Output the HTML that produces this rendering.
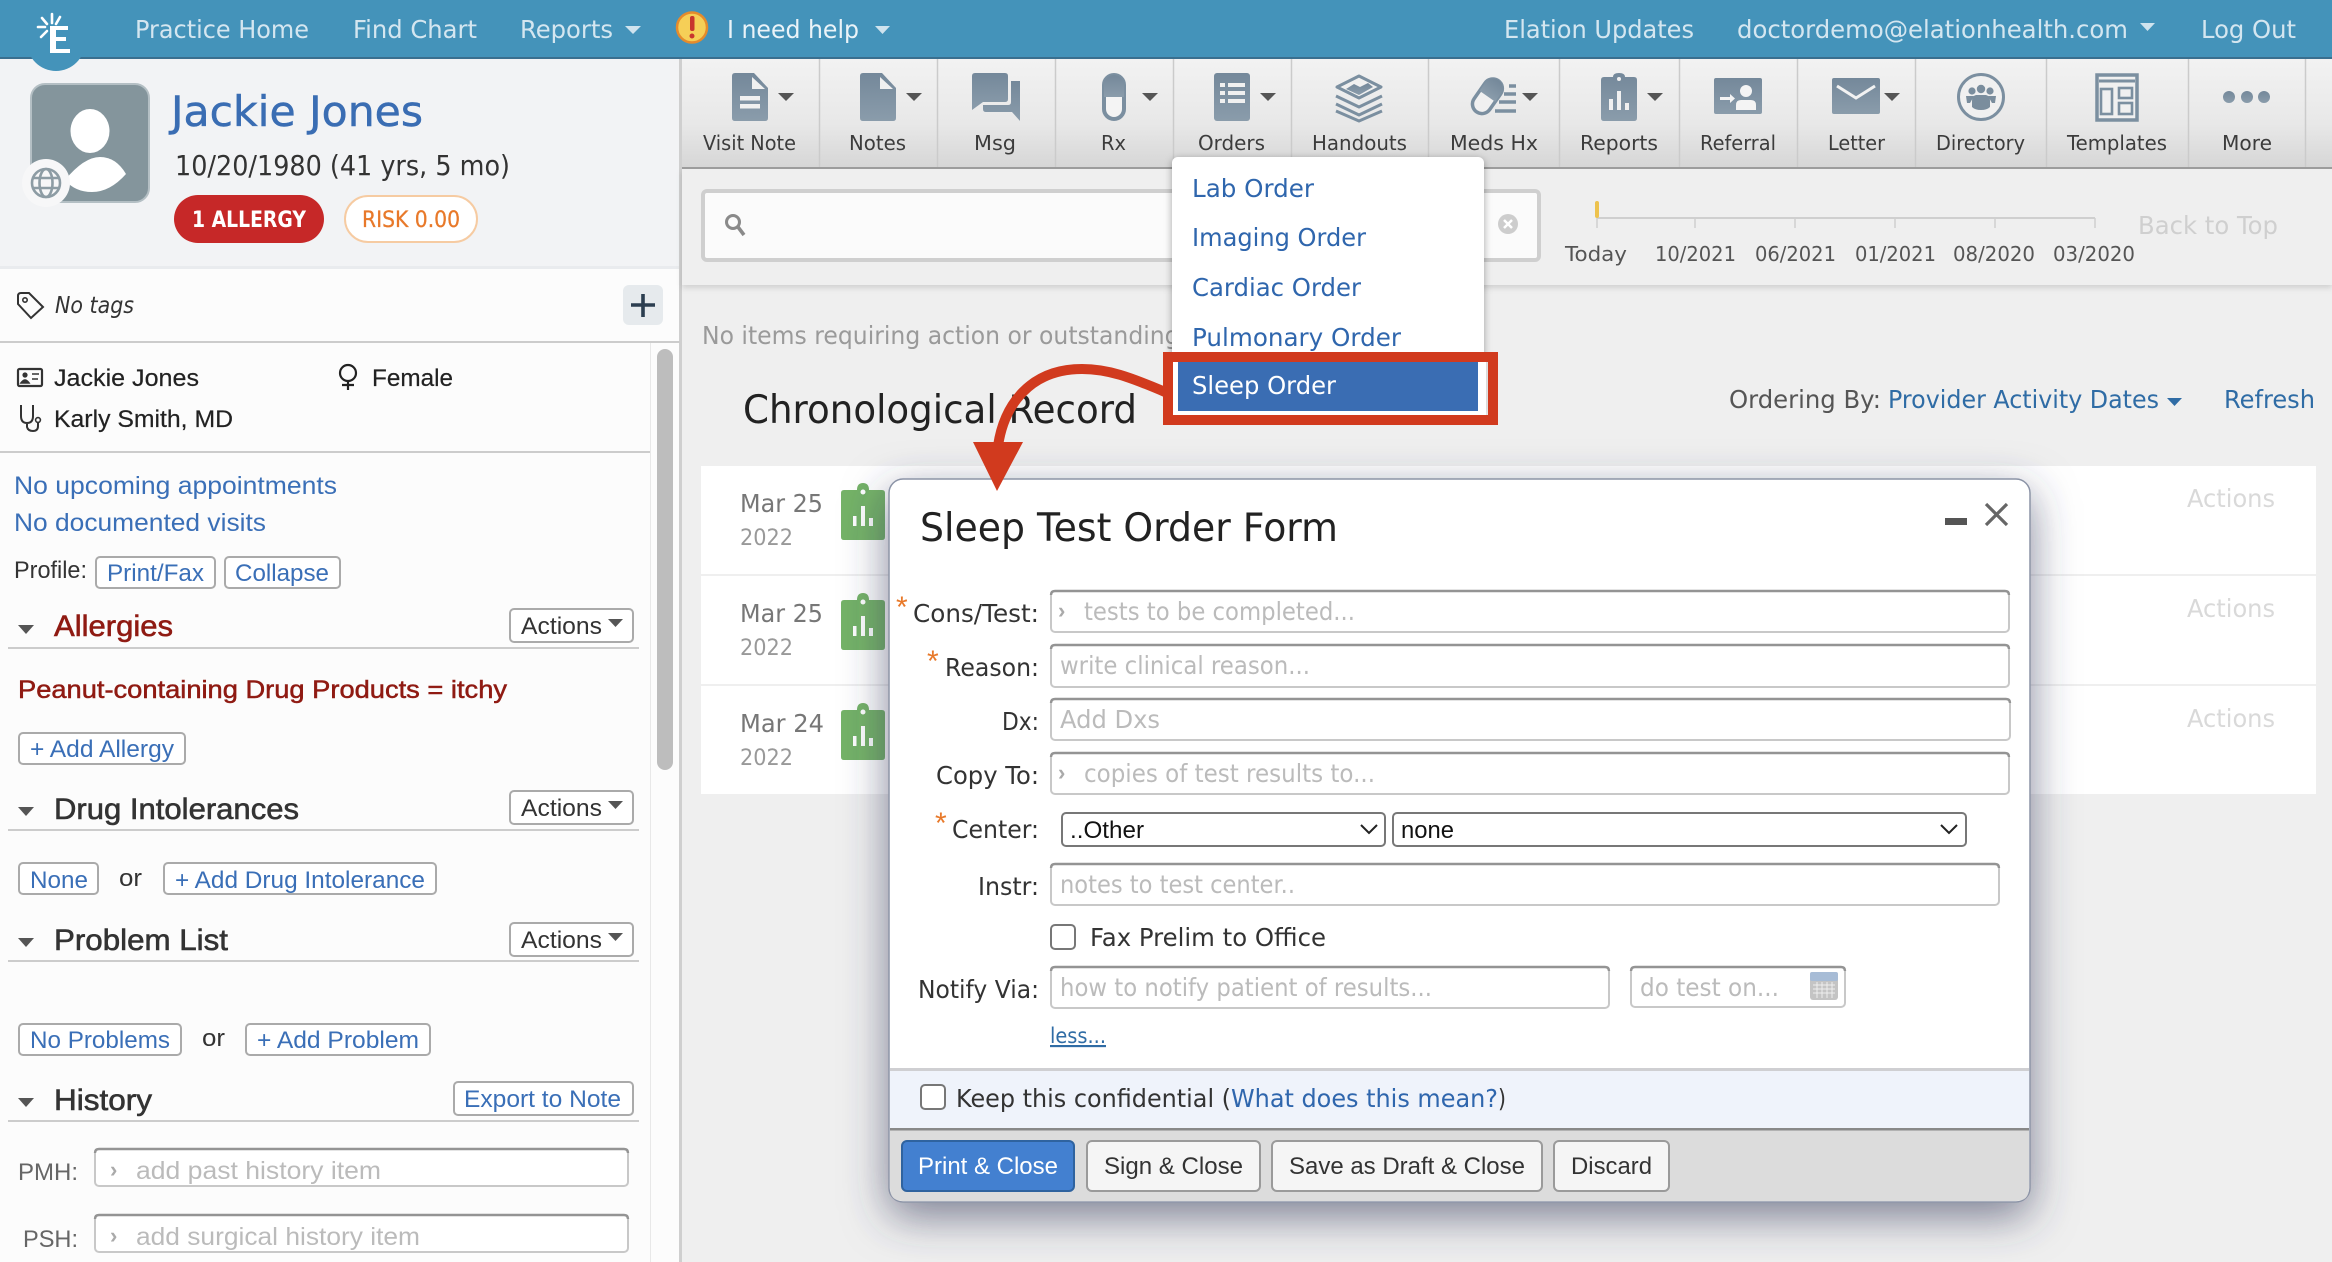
<!DOCTYPE html>
<html><head><meta charset="utf-8"><title>Sleep Test Order Form</title>
<style>
html,body{margin:0;padding:0;background:#efefef;width:2332px;height:1262px;overflow:hidden}
svg{display:block;position:absolute;left:0;top:0}
text{font-family:"Liberation Sans",sans-serif;white-space:pre}
text.o,.nav,.lb,.f,.dd,.pho{font-family:"DejaVu Sans","Liberation Sans",sans-serif}
.nav{font-size:24.5px;fill:#d4e6f0}
.lb{font-size:20.5px;fill:#3c3c3c}
.f{font-size:24.5px;fill:#333}
.ph{font-size:25px;fill:#bbb}
.pho{font-size:24.5px;fill:#bbb}
.lk{font-size:24px;fill:#3a6fb7}
.sec{font-size:30px;fill:#333;stroke:#333;stroke-width:.6}
.act{font-size:24px;fill:#333}
.dd{font-size:25px;fill:#2f66ad}
.btn{font-size:24px;fill:#333}
.sb{fill:#fff;stroke:#aaa;stroke-width:2}
.inp{fill:#fff;stroke:#c8c8c8;stroke-width:2}
.top{stroke:#949494;stroke-width:2.4}
.ic{fill:url(#slate)}
.car{fill:#555}
</style></head><body>
<svg width="2332" height="1262" viewBox="0 0 2332 1262" xmlns="http://www.w3.org/2000/svg">
<defs>
<linearGradient id="tb" x1="0" y1="0" x2="0" y2="1"><stop offset="0" stop-color="#f2f2f2"/><stop offset=".6" stop-color="#e8e8e8"/><stop offset="1" stop-color="#d6d6d6"/></linearGradient>
<linearGradient id="slate" x1="0" y1="0" x2="0" y2="1"><stop offset="0" stop-color="#74889a"/><stop offset="1" stop-color="#8a9cab"/></linearGradient>
<filter id="msh" x="-15%" y="-15%" width="130%" height="135%"><feDropShadow dx="0" dy="14" stdDeviation="22" flood-color="#343e5c" flood-opacity=".62"/></filter>
<filter id="dsh" x="-10%" y="-10%" width="120%" height="120%"><feDropShadow dx="0" dy="2" stdDeviation="4" flood-color="#000" flood-opacity=".35"/></filter>
<filter id="pb" x="-5%" y="-100%" width="110%" height="300%"><feDropShadow dx="0" dy="3" stdDeviation="3" flood-color="#000" flood-opacity=".13"/></filter>
</defs>

<!-- page bg -->
<rect width="2332" height="1262" fill="#efefef"/>

<!-- sidebar -->
<rect x="0" y="59" width="680" height="209" fill="#f2f3f5"/>
<rect x="0" y="268" width="680" height="994" fill="#fcfcfc"/>
<rect x="0" y="266" width="680" height="3" fill="#e9ebee"/>
<rect x="679" y="59" width="3" height="1203" fill="#cfcfcf"/>

<!-- avatar -->
<rect x="31" y="84" width="118" height="118" rx="14" fill="#84959c" stroke="#b4bfc4" stroke-width="2"/>
<ellipse cx="90" cy="131" rx="19.5" ry="22" fill="#fff"/>
<path d="M65 180Q84 157 100 157Q116 157 126 174Q110 192 92 192Q75 192 65 180Z" fill="#fff"/>
<ellipse cx="46" cy="183" rx="24" ry="24" fill="#f7f7f8"/>
<g fill="none" stroke="#8d9ca4" stroke-width="2.6"><circle cx="46" cy="183" r="14"/><ellipse cx="46" cy="183" rx="6.5" ry="14"/><path d="M33 178H59M33 188H59"/></g>

<text class="o" x="171" y="126" font-size="42" textLength="252" lengthAdjust="spacingAndGlyphs" fill="#3a6db3" stroke="#3a6db3" stroke-width=".5">Jackie Jones</text>
<text class="o" x="175" y="175" font-size="27.500" textLength="335" lengthAdjust="spacingAndGlyphs" fill="#333">10/20/1980 (41 yrs, 5 mo)</text>
<rect x="174" y="195" width="150" height="48" rx="24" fill="#c62828"/>
<text class="o" x="192" y="227" font-size="22.500" font-weight="bold" textLength="114" lengthAdjust="spacingAndGlyphs" fill="#fff">1 ALLERGY</text>
<rect x="345" y="196" width="132" height="46" rx="23" fill="#fff" stroke="#f6cba2" stroke-width="2"/>
<text class="o" x="362" y="227" font-size="22.500" textLength="98" lengthAdjust="spacingAndGlyphs" fill="#e8792a" stroke="#e8792a" stroke-width=".3">RISK 0.00</text>

<!-- tags -->
<path d="M18 296Q18 293 21 293H29L43 307L31 318L18 304Z" fill="none" stroke="#333" stroke-width="2"/><circle cx="25" cy="300" r="2.2" fill="none" stroke="#333" stroke-width="1.6"/>
<text class="o" x="55" y="313" font-size="23.500" font-style="italic" textLength="79" lengthAdjust="spacingAndGlyphs" fill="#333">No tags</text>
<rect x="623" y="285" width="40" height="40" rx="6" fill="#e6eaed"/>
<path d="M631 305H655M643 294V317" stroke="#2c3e50" stroke-width="3.6" fill="none"/>
<rect x="0" y="341" width="680" height="2" fill="#ccc"/>

<!-- scrollbar -->
<rect x="650" y="343" width="1" height="919" fill="#e8e8e8"/>
<rect x="657" y="349" width="16" height="421" rx="8" fill="#bdbdbd"/>

<!-- demographics -->
<rect x="18" y="369" width="24" height="17" rx="1.5" fill="none" stroke="#333" stroke-width="2.2"/>
<circle cx="25" cy="375" r="2.6" fill="#333"/><path d="M21 383Q25 377 29 383ZM32 374H39M32 379H38" fill="#333" stroke="#333" stroke-width="1.6"/>
<text x="54" y="386" font-size="24" textLength="145" lengthAdjust="spacingAndGlyphs" fill="#222" stroke="#222" stroke-width=".2">Jackie Jones</text>
<circle cx="348" cy="373" r="8" fill="none" stroke="#222" stroke-width="2.2"/><path d="M348 381V390M342 385H354" stroke="#222" stroke-width="2.2"/>
<text x="372" y="386" font-size="24" textLength="81" lengthAdjust="spacingAndGlyphs" fill="#222" stroke="#222" stroke-width=".2">Female</text>
<path d="M21 405V416Q21 423 27 423Q33 423 33 416V405M27 423V427Q28 431 33 431Q38 431 38 426V422" fill="none" stroke="#333" stroke-width="2"/><circle cx="38" cy="420" r="2.4" fill="none" stroke="#333" stroke-width="1.6"/>
<text x="54" y="427" font-size="24" textLength="179" lengthAdjust="spacingAndGlyphs" fill="#222" stroke="#222" stroke-width=".2">Karly Smith, MD</text>
<rect x="0" y="451" width="650" height="2" fill="#ccc"/>

<text class="lk" x="14" y="494" textLength="323" lengthAdjust="spacingAndGlyphs" style="font-size:25px">No upcoming appointments</text>
<text class="lk" x="14" y="531" textLength="252" lengthAdjust="spacingAndGlyphs" style="font-size:25px">No documented visits</text>
<text x="14" y="578" font-size="24" textLength="73" lengthAdjust="spacingAndGlyphs" fill="#333">Profile:</text>
<rect class="sb" x="96" y="557" width="119" height="31" rx="4"/><text class="lk" x="107" y="581" textLength="97" lengthAdjust="spacingAndGlyphs">Print/Fax</text>
<rect class="sb" x="225" y="557" width="115" height="31" rx="4"/><text class="lk" x="235" y="581" textLength="94" lengthAdjust="spacingAndGlyphs">Collapse</text>

<!-- Allergies -->
<path d="M18 625H34L26 634Z" class="car"/>
<text x="54" y="636" font-size="30" textLength="119" lengthAdjust="spacingAndGlyphs" fill="#8f1a12" stroke="#8f1a12" stroke-width=".6">Allergies</text>
<rect class="sb" x="510" y="609" width="123" height="33" rx="4"/><text class="act" x="521" y="634" textLength="81" lengthAdjust="spacingAndGlyphs">Actions</text><path d="M608 619H623L615.500 627Z" class="car"/>
<rect x="8" y="647" width="631" height="2" fill="#ccc"/>
<text x="18" y="698" font-size="25" textLength="489" lengthAdjust="spacingAndGlyphs" fill="#8f1a12" stroke="#8f1a12" stroke-width=".5">Peanut-containing Drug Products = itchy</text>
<rect class="sb" x="19" y="733" width="166" height="31" rx="4"/><text class="lk" x="30" y="757" textLength="144" lengthAdjust="spacingAndGlyphs">+ Add Allergy</text>

<!-- Drug Intolerances -->
<path d="M18 807H34L26 816Z" class="car"/>
<text class="sec" x="54" y="819" textLength="245" lengthAdjust="spacingAndGlyphs">Drug Intolerances</text>
<rect class="sb" x="510" y="791" width="123" height="33" rx="4"/><text class="act" x="521" y="816" textLength="81" lengthAdjust="spacingAndGlyphs">Actions</text><path d="M608 801H623L615.500 809Z" class="car"/>
<rect x="8" y="829" width="631" height="2" fill="#ccc"/>
<rect class="sb" x="19" y="863" width="79" height="31" rx="4"/><text class="lk" x="30" y="888" textLength="58" lengthAdjust="spacingAndGlyphs">None</text>
<text x="119" y="886" font-size="24" textLength="23" lengthAdjust="spacingAndGlyphs" fill="#333">or</text>
<rect class="sb" x="164" y="863" width="272" height="31" rx="4"/><text class="lk" x="175" y="888" textLength="250" lengthAdjust="spacingAndGlyphs">+ Add Drug Intolerance</text>

<!-- Problem List -->
<path d="M18 938H34L26 947Z" class="car"/>
<text class="sec" x="54" y="950" textLength="174" lengthAdjust="spacingAndGlyphs">Problem List</text>
<rect class="sb" x="510" y="923" width="123" height="33" rx="4"/><text class="act" x="521" y="948" textLength="81" lengthAdjust="spacingAndGlyphs">Actions</text><path d="M608 933H623L615.500 941Z" class="car"/>
<rect x="8" y="960" width="631" height="2" fill="#ccc"/>
<rect class="sb" x="19" y="1024" width="162" height="31" rx="4"/><text class="lk" x="30" y="1048" textLength="140" lengthAdjust="spacingAndGlyphs">No Problems</text>
<text x="202" y="1046" font-size="24" textLength="23" lengthAdjust="spacingAndGlyphs" fill="#333">or</text>
<rect class="sb" x="246" y="1024" width="184" height="31" rx="4"/><text class="lk" x="257" y="1048" textLength="162" lengthAdjust="spacingAndGlyphs">+ Add Problem</text>

<!-- History -->
<path d="M18 1098H34L26 1107Z" class="car"/>
<text class="sec" x="54" y="1110" textLength="98" lengthAdjust="spacingAndGlyphs">History</text>
<rect class="sb" x="454" y="1082" width="179" height="33" rx="4"/><text class="lk" x="464" y="1107" textLength="157" lengthAdjust="spacingAndGlyphs">Export to Note</text>
<rect x="8" y="1120" width="631" height="2" fill="#ccc"/>
<text x="18" y="1180" font-size="24" textLength="60" lengthAdjust="spacingAndGlyphs" fill="#666">PMH:</text>
<rect x="95" y="1149" width="533" height="37" rx="4" class="inp"/><path d="M95 1153Q95 1149 99 1149H624Q628 1149 628 1153" fill="none" class="top"/>
<text x="110" y="1177" font-size="22" font-weight="bold" fill="#aaa">›</text>
<text x="136" y="1179" class="ph" textLength="245" lengthAdjust="spacingAndGlyphs">add past history item</text>
<text x="23" y="1247" font-size="24" textLength="55" lengthAdjust="spacingAndGlyphs" fill="#666">PSH:</text>
<rect x="95" y="1215" width="533" height="37" rx="4" class="inp"/><path d="M95 1219Q95 1215 99 1215H624Q628 1215 628 1219" fill="none" class="top"/>
<text x="110" y="1243" font-size="22" font-weight="bold" fill="#aaa">›</text>
<text x="136" y="1245" class="ph" textLength="284" lengthAdjust="spacingAndGlyphs">add surgical history item</text>

<!-- search bar section -->
<rect x="682" y="169" width="1650" height="116" fill="#efefef" filter="url(#pb)"/>
<rect x="703" y="191" width="836" height="69" rx="4" fill="#fbfbfb" stroke="#cfcfcf" stroke-width="4"/>
<circle cx="733" cy="222" r="6.500" fill="none" stroke="#8a8a8a" stroke-width="3"/><path d="M738 227L744 235" stroke="#8a8a8a" stroke-width="3.600"/>
<circle cx="1508" cy="224" r="10" fill="#cdcdcd"/><path d="M1504 220L1512 228M1512 220L1504 228" stroke="#fff" stroke-width="2.500"/>

<!-- timeline -->
<path d="M1597 218H2095" stroke="#cfcfcf" stroke-width="2"/>
<path d="M1597 218V228M1695 218V228M1795 218V228M1895 218V228M1995 218V228M2095 218V228" stroke="#cfcfcf" stroke-width="1.500"/>
<rect x="1595" y="201" width="4" height="17" rx="2" fill="#edc24d"/>
<text class="lb" x="1565" y="261" textLength="62" lengthAdjust="spacingAndGlyphs" style="fill:#555">Today</text>
<text class="lb" x="1655" y="261" textLength="81" lengthAdjust="spacingAndGlyphs" style="fill:#555">10/2021</text>
<text class="lb" x="1755" y="261" textLength="81" lengthAdjust="spacingAndGlyphs" style="fill:#555">06/2021</text>
<text class="lb" x="1855" y="261" textLength="81" lengthAdjust="spacingAndGlyphs" style="fill:#555">01/2021</text>
<text class="lb" x="1953" y="261" textLength="82" lengthAdjust="spacingAndGlyphs" style="fill:#555">08/2020</text>
<text class="lb" x="2053" y="261" textLength="82" lengthAdjust="spacingAndGlyphs" style="fill:#555">03/2020</text>
<text class="o" x="2138" y="234" font-size="24.500" textLength="140" lengthAdjust="spacingAndGlyphs" fill="#cfcfcf">Back to Top</text>

<text class="o" x="702" y="344" font-size="24.500" textLength="560" lengthAdjust="spacingAndGlyphs" fill="#9a9a9a">No items requiring action or outstanding orders</text>
<text class="o" x="743" y="423" font-size="39" textLength="394" lengthAdjust="spacingAndGlyphs" fill="#222">Chronological Record</text>
<text class="o" x="1729" y="408" font-size="24.500" textLength="152" lengthAdjust="spacingAndGlyphs" fill="#555">Ordering By:</text>
<text class="o" x="1888" y="408" font-size="24.500" textLength="271" lengthAdjust="spacingAndGlyphs" fill="#2f6ca5">Provider Activity Dates</text>
<path d="M2167 398H2182L2174.500 406Z" fill="#2f6ca5"/>
<text class="o" x="2224" y="408" font-size="24.500" textLength="91" lengthAdjust="spacingAndGlyphs" fill="#2f6ca5">Refresh</text>

<!-- rows -->
<rect x="701" y="466" width="1615" height="108" fill="#fff"/>
<rect x="701" y="576" width="1615" height="108" fill="#fff"/>
<rect x="701" y="686" width="1615" height="108" fill="#fff"/>
<text class="o" x="740" y="512" font-size="24.500" textLength="83" lengthAdjust="spacingAndGlyphs" fill="#777">Mar 25</text>
<text class="o" x="740" y="545" font-size="22.500" textLength="53" lengthAdjust="spacingAndGlyphs" fill="#999">2022</text>
<text class="o" x="740" y="622" font-size="24.500" textLength="83" lengthAdjust="spacingAndGlyphs" fill="#777">Mar 25</text>
<text class="o" x="740" y="655" font-size="22.500" textLength="53" lengthAdjust="spacingAndGlyphs" fill="#999">2022</text>
<text class="o" x="740" y="732" font-size="24.500" textLength="84" lengthAdjust="spacingAndGlyphs" fill="#777">Mar 24</text>
<text class="o" x="740" y="765" font-size="22.500" textLength="53" lengthAdjust="spacingAndGlyphs" fill="#999">2022</text>
<text class="o" x="2187" y="507" font-size="24.500" textLength="88" lengthAdjust="spacingAndGlyphs" fill="#d9d9d9">Actions</text>
<text class="o" x="2187" y="617" font-size="24.500" textLength="88" lengthAdjust="spacingAndGlyphs" fill="#d9d9d9">Actions</text>
<text class="o" x="2187" y="727" font-size="24.500" textLength="88" lengthAdjust="spacingAndGlyphs" fill="#d9d9d9">Actions</text>
<g fill="#74b267">
<path d="M844 490H857Q857 483 863 483Q869 483 869 490H882Q885 490 885 493V537Q885 540 882 540H844Q841 540 841 537V493Q841 490 844 490Z"/>
<path d="M844 600H857Q857 593 863 593Q869 593 869 600H882Q885 600 885 603V647Q885 650 882 650H844Q841 650 841 647V603Q841 600 844 600Z"/>
<path d="M844 710H857Q857 703 863 703Q869 703 869 710H882Q885 710 885 713V757Q885 760 882 760H844Q841 760 841 757V713Q841 710 844 710Z"/>
</g>
<g fill="#fff"><circle cx="863" cy="492" r="2.500"/><rect x="853" y="516" width="3.500" height="10"/><rect x="861" y="506" width="4" height="20"/><rect x="869" y="518" width="4" height="8"/>
<circle cx="863" cy="602" r="2.500"/><rect x="853" y="626" width="3.500" height="10"/><rect x="861" y="616" width="4" height="20"/><rect x="869" y="628" width="4" height="8"/>
<circle cx="863" cy="712" r="2.500"/><rect x="853" y="736" width="3.500" height="10"/><rect x="861" y="726" width="4" height="20"/><rect x="869" y="738" width="4" height="8"/></g>

<!-- top bar -->
<rect x="0" y="0" width="2332" height="58" fill="#4493ba"/>
<rect x="0" y="57" width="2332" height="2" fill="#3a6f8f"/>
<circle cx="56" cy="42" r="29" fill="#4493ba"/>
<g stroke="#fff" stroke-width="2.600" stroke-linecap="round"><path d="M52 14V23M42 18L47 24M38 27H45M41 37L47 31M60 17L56 24"/></g>
<path d="M50 26H68V30H56V37H66V41H56V49H70V53H50Z" fill="#fff"/>
<text class="nav" x="135" y="38" textLength="174" lengthAdjust="spacingAndGlyphs">Practice Home</text>
<text class="nav" x="353" y="38" textLength="124" lengthAdjust="spacingAndGlyphs">Find Chart</text>
<text class="nav" x="520" y="38" textLength="93" lengthAdjust="spacingAndGlyphs">Reports</text>
<path d="M625 26H641L633 34Z" fill="#cfe3ee"/>
<circle cx="692" cy="27.500" r="15" fill="#f6cf57" stroke="#e58b2c" stroke-width="2.500"/>
<rect x="690" y="16" width="4.500" height="15" rx="2" fill="#c8352d"/><circle cx="692" cy="36" r="2.500" fill="#c8352d"/>
<text class="nav" x="727" y="38" textLength="132" lengthAdjust="spacingAndGlyphs" style="fill:#eaf3f8">I need help</text>
<path d="M875 26H890L882.500 34Z" fill="#cfe3ee"/>
<text class="nav" x="1504" y="38" textLength="190" lengthAdjust="spacingAndGlyphs">Elation Updates</text>
<text class="nav" x="1737" y="38" textLength="391" lengthAdjust="spacingAndGlyphs">doctordemo@elationhealth.com</text>
<path d="M2140 23H2155L2147.500 31Z" fill="#cfe3ee"/>
<text class="nav" x="2201" y="38" textLength="95" lengthAdjust="spacingAndGlyphs">Log Out</text>

<!-- toolbar -->
<rect x="682" y="59" width="1650" height="108" fill="url(#tb)"/>
<rect x="682" y="167" width="1650" height="2" fill="#9c9c9c"/>
<path d="M819.500 59V167M937.500 59V167M1055.500 59V167M1173.500 59V167M1291.500 59V167M1428.500 59V167M1559.500 59V167M1679.500 59V167M1797.500 59V167M1915.500 59V167M2046.500 59V167M2188.500 59V167M2305.500 59V167" stroke="#cbcbcb" stroke-width="1.500"/>

<!-- Visit Note -->
<path class="ic" d="M735 73H754L768 88V118Q768 121 765 121H735Q732 121 732 118V76Q732 73 735 73Z"/>
<path d="M752 77V89H765Z" fill="#f0f0f0"/><rect x="740" y="96" width="20" height="4.500" fill="#f0f0f0"/><rect x="740" y="104" width="20" height="4.500" fill="#f0f0f0"/>
<path class="car" d="M778 93H794L786 101Z"/>
<!-- Notes -->
<path class="ic" d="M863 73H882L896 88V118Q896 121 893 121H863Q860 121 860 118V76Q860 73 863 73Z"/>
<path d="M880 77V89H893Z" fill="#f0f0f0"/><path class="car" d="M906 93H922L914 101Z"/>
<!-- Msg -->
<path class="ic" d="M1011 81H1020V121L1012 112H986Q983 112 983 109V105H1008Q1011 105 1011 102Z"/>
<path class="ic" d="M975 73H1005Q1008 73 1008 76V99Q1008 102 1005 102H983L972 110V76Q972 73 975 73Z"/>
<!-- Rx -->
<rect x="1104" y="75" width="20" height="44" rx="10" fill="#f4f4f4" stroke="#7b8fa0" stroke-width="4"/>
<path class="ic" d="M1104 97V85A10 10 0 0 1 1124 85V97Z"/>
<path class="car" d="M1142 93H1158L1150 101Z"/>
<!-- Orders -->
<rect class="ic" x="1214" y="73" width="36" height="48" rx="3"/>
<g fill="#f0f0f0"><rect x="1220" y="83" width="5" height="4"/><rect x="1228" y="83" width="17" height="4"/><rect x="1220" y="91" width="5" height="4"/><rect x="1228" y="91" width="17" height="4"/><rect x="1220" y="99" width="5" height="4"/><rect x="1228" y="99" width="17" height="4"/></g>
<path class="car" d="M1260 93H1276L1268 101Z"/>
<!-- Handouts -->
<g fill="none" stroke="#7b8fa0" stroke-width="3" stroke-linejoin="round"><path d="M1337 87L1359 76L1381 87L1359 98Z" fill="#f0f0f0"/><path d="M1336 96L1359 107L1382 96M1336 104L1359 115L1382 104M1336 111L1359 121L1382 111"/></g>
<path class="ic" d="M1346 89L1354 84L1360 87L1368 83L1373 87L1359 95Z"/>
<!-- Meds Hx -->
<g transform="rotate(35 1487 96)"><rect x="1478" y="77" width="19" height="38" rx="9.500" fill="#f0f0f0" stroke="#7b8fa0" stroke-width="3.500"/><path class="ic" d="M1478 96V86A9.500 9.500 0 0 1 1497 86V96Z"/></g>
<path d="M1509 86H1516M1504 94H1516M1499 102H1516M1495 111H1516" stroke="#7b8fa0" stroke-width="3.500"/>
<path class="car" d="M1522 93H1538L1530 101Z"/>
<!-- Reports -->
<path class="ic" d="M1604 77H1613Q1613 73 1619 73Q1625 73 1625 77H1634Q1637 77 1637 80V118Q1637 121 1634 121H1604Q1601 121 1601 118V80Q1601 77 1604 77Z"/>
<g fill="#f0f0f0"><circle cx="1619" cy="79" r="2"/><rect x="1609" y="99" width="4" height="11"/><rect x="1617" y="91" width="4" height="19"/><rect x="1625" y="103" width="4" height="7"/></g>
<path class="car" d="M1647 93H1663L1655 101Z"/>
<!-- Referral -->
<rect class="ic" x="1714" y="78" width="48" height="36" rx="2"/>
<g fill="#f4f4f4"><circle cx="1746" cy="91" r="6"/><path d="M1736 110V105Q1736 100 1741 100H1751Q1756 100 1756 105V110Z"/><path d="M1720 97H1730V94L1735 98.500L1730 103V100H1720Z"/></g>
<!-- Letter -->
<rect class="ic" x="1832" y="78" width="48" height="36" rx="2"/>
<path d="M1837 86L1856 98L1875 86" fill="none" stroke="#f2f2f2" stroke-width="3"/>
<path class="car" d="M1884 93H1900L1892 101Z"/>
<!-- Directory -->
<circle cx="1981" cy="97" r="22.500" fill="#f0f0f0" stroke="#7b8fa0" stroke-width="3"/>
<g fill="#7a8d9d"><circle cx="1972" cy="91" r="3.600"/><circle cx="1990" cy="91" r="3.600"/><circle cx="1981" cy="89" r="4.200"/><path d="M1972 107V101Q1972 96 1976 95H1986Q1990 96 1990 101V107Q1987 110 1981 110Q1975 110 1972 107Z"/><path d="M1966 96H1974L1970 103H1967ZM1996 96H1988L1992 103H1995Z"/></g>
<!-- Templates -->
<rect x="2097" y="75" width="40" height="45" fill="#f0f0f0" stroke="#7b8fa0" stroke-width="3.500"/>
<path d="M2099 81H2135" stroke="#7b8fa0" stroke-width="3"/>
<rect x="2101" y="89" width="11" height="25" fill="none" stroke="#7b8fa0" stroke-width="2.600"/><rect x="2119" y="88" width="13" height="10" fill="none" stroke="#7b8fa0" stroke-width="2.600"/><rect x="2119" y="103" width="13" height="11" fill="none" stroke="#7b8fa0" stroke-width="2.600"/>
<!-- More -->
<ellipse class="ic" cx="2229" cy="97" rx="6" ry="6"/><ellipse class="ic" cx="2247" cy="97" rx="6" ry="6"/><ellipse class="ic" cx="2264" cy="97" rx="6" ry="6"/>

<text class="lb" x="703" y="150" textLength="93" lengthAdjust="spacingAndGlyphs">Visit Note</text>
<text class="lb" x="849" y="150" textLength="57" lengthAdjust="spacingAndGlyphs">Notes</text>
<text class="lb" x="974" y="150" textLength="42" lengthAdjust="spacingAndGlyphs">Msg</text>
<text class="lb" x="1101" y="150" textLength="25" lengthAdjust="spacingAndGlyphs">Rx</text>
<text class="lb" x="1198" y="150" textLength="67" lengthAdjust="spacingAndGlyphs">Orders</text>
<text class="lb" x="1312" y="150" textLength="95" lengthAdjust="spacingAndGlyphs">Handouts</text>
<text class="lb" x="1450" y="150" textLength="88" lengthAdjust="spacingAndGlyphs">Meds Hx</text>
<text class="lb" x="1580" y="150" textLength="78" lengthAdjust="spacingAndGlyphs">Reports</text>
<text class="lb" x="1700" y="150" textLength="76" lengthAdjust="spacingAndGlyphs">Referral</text>
<text class="lb" x="1828" y="150" textLength="57" lengthAdjust="spacingAndGlyphs">Letter</text>
<text class="lb" x="1936" y="150" textLength="89" lengthAdjust="spacingAndGlyphs">Directory</text>
<text class="lb" x="2067" y="150" textLength="100" lengthAdjust="spacingAndGlyphs">Templates</text>
<text class="lb" x="2222" y="150" textLength="50" lengthAdjust="spacingAndGlyphs">More</text>

<!-- dropdown -->
<rect x="1172" y="157" width="312" height="258" rx="6" fill="#fff" filter="url(#dsh)"/>
<text class="dd" x="1192" y="197" textLength="122" lengthAdjust="spacingAndGlyphs">Lab Order</text>
<text class="dd" x="1192" y="246" textLength="174" lengthAdjust="spacingAndGlyphs">Imaging Order</text>
<text class="dd" x="1192" y="296" textLength="169" lengthAdjust="spacingAndGlyphs">Cardiac Order</text>
<text class="dd" x="1192" y="346" textLength="209" lengthAdjust="spacingAndGlyphs">Pulmonary Order</text>

<!-- modal -->
<rect x="889" y="479" width="1141" height="723" rx="14" fill="#fff" stroke="#8b93a6" stroke-width="1.500" filter="url(#msh)"/>
<text class="o" x="920" y="541" font-size="39" textLength="418" lengthAdjust="spacingAndGlyphs" fill="#222">Sleep Test Order Form</text>
<rect x="1945" y="518" width="22" height="7" fill="#555"/>
<path d="M1986 504L2007 525M2007 504L1986 525" stroke="#666" stroke-width="3.200"/>

<text x="913" y="622" class="f" textLength="126" lengthAdjust="spacingAndGlyphs">Cons/Test:</text>
<text x="945" y="676" class="f" textLength="94" lengthAdjust="spacingAndGlyphs">Reason:</text>
<text x="1002" y="730" class="f" textLength="37" lengthAdjust="spacingAndGlyphs">Dx:</text>
<text x="936" y="784" class="f" textLength="103" lengthAdjust="spacingAndGlyphs">Copy To:</text>
<text x="952" y="838" class="f" textLength="87" lengthAdjust="spacingAndGlyphs">Center:</text>
<text x="978" y="895" class="f" textLength="61" lengthAdjust="spacingAndGlyphs">Instr:</text>
<text x="918" y="998" class="f" textLength="121" lengthAdjust="spacingAndGlyphs">Notify Via:</text>
<text x="896" y="617" font-size="30" fill="#e8792a">*</text>
<text x="927" y="671" font-size="30" fill="#e8792a">*</text>
<text x="935" y="833" font-size="30" fill="#e8792a">*</text>

<!-- inputs -->
<rect class="inp" x="1051" y="591" width="958" height="41" rx="4"/><path class="top" fill="none" d="M1051 595Q1051 591 1055 591H2005Q2009 591 2009 595"/>
<rect class="inp" x="1051" y="645" width="958" height="42" rx="4"/><path class="top" fill="none" d="M1051 649Q1051 645 1055 645H2005Q2009 645 2009 649"/>
<rect class="inp" x="1051" y="699" width="959" height="41" rx="4"/><path class="top" fill="none" d="M1051 703Q1051 699 1055 699H2006Q2010 699 2010 703"/>
<rect class="inp" x="1051" y="753" width="958" height="41" rx="4"/><path class="top" fill="none" d="M1051 757Q1051 753 1055 753H2005Q2009 753 2009 757"/>
<rect class="inp" x="1051" y="864" width="948" height="41" rx="4"/><path class="top" fill="none" d="M1051 868Q1051 864 1055 864H1995Q1999 864 1999 868"/>
<rect class="inp" x="1051" y="967" width="558" height="41" rx="4"/><path class="top" fill="none" d="M1051 971Q1051 967 1055 967H1605Q1609 967 1609 971"/>
<rect class="inp" x="1631" y="967" width="214" height="40" rx="4"/><path class="top" fill="none" d="M1631 971Q1631 967 1635 967H1841Q1845 967 1845 971"/>
<text x="1058" y="618" font-size="22" font-weight="bold" fill="#aaa">›</text>
<text class="pho" x="1084" y="620" textLength="271" lengthAdjust="spacingAndGlyphs">tests to be completed...</text>
<text class="pho" x="1060" y="674" textLength="250" lengthAdjust="spacingAndGlyphs">write clinical reason...</text>
<text class="pho" x="1060" y="728" textLength="100" lengthAdjust="spacingAndGlyphs">Add Dxs</text>
<text x="1058" y="780" font-size="22" font-weight="bold" fill="#aaa">›</text>
<text class="pho" x="1084" y="782" textLength="291" lengthAdjust="spacingAndGlyphs">copies of test results to...</text>
<text class="pho" x="1060" y="893" textLength="235" lengthAdjust="spacingAndGlyphs">notes to test center..</text>

<rect x="1062" y="813" width="323" height="33" rx="4" fill="#fff" stroke="#777" stroke-width="2"/>
<text x="1070" y="838" font-size="24" textLength="74" lengthAdjust="spacingAndGlyphs" fill="#111">..Other</text>
<path d="M1361 825L1369 833L1377 825" fill="none" stroke="#222" stroke-width="2"/>
<rect x="1393" y="813" width="573" height="33" rx="4" fill="#fff" stroke="#777" stroke-width="2"/>
<text x="1401" y="838" font-size="24" textLength="53" lengthAdjust="spacingAndGlyphs" fill="#111">none</text>
<path d="M1941 825L1949 833L1957 825" fill="none" stroke="#222" stroke-width="2"/>

<rect x="1051" y="925" width="24" height="24" rx="4" fill="#fff" stroke="#777" stroke-width="2"/>
<text x="1090" y="946" class="f" textLength="236" lengthAdjust="spacingAndGlyphs">Fax Prelim to Office</text>
<text class="pho" x="1060" y="996" textLength="372" lengthAdjust="spacingAndGlyphs">how to notify patient of results...</text>
<text class="pho" x="1640" y="996" textLength="139" lengthAdjust="spacingAndGlyphs">do test on...</text>
<rect x="1810" y="972" width="28" height="28" rx="3" fill="#c4c4c4"/><rect x="1810" y="972" width="28" height="9" rx="2" fill="#a7bcd6"/>
<path d="M1813 985H1835M1813 989H1835M1813 993H1835M1817 982V998M1822 982V998M1827 982V998M1832 982V998" stroke="#eee" stroke-width="1"/>
<text class="o" x="1050" y="1043" font-size="21.500" textLength="56" lengthAdjust="spacingAndGlyphs" fill="#2f6ca5" text-decoration="underline">less...</text>

<!-- confidential -->
<rect x="890" y="1069" width="1139" height="60" fill="#eff3fb"/>
<rect x="890" y="1068" width="1139" height="3" fill="#cfcfd2"/>
<rect x="921" y="1085" width="24" height="24" rx="4" fill="#fff" stroke="#777" stroke-width="2"/>
<text x="956" y="1107" class="f" textLength="275" lengthAdjust="spacingAndGlyphs">Keep this confidential (</text>
<text class="o" x="1231" y="1107" font-size="24.500" textLength="267" lengthAdjust="spacingAndGlyphs" fill="#2f66ad">What does this mean?</text>
<text x="1498" y="1107" class="f" textLength="8" lengthAdjust="spacingAndGlyphs">)</text>

<!-- footer -->
<path d="M890 1129H2029V1188Q2029 1201 2016 1201H903Q890 1201 890 1188Z" fill="#dcdcdc"/>
<rect x="890" y="1128" width="1139" height="2.500" fill="#888"/>
<rect x="902" y="1141" width="172" height="50" rx="5" fill="#4380d0" stroke="#2f639f" stroke-width="2"/>
<text x="918" y="1174" font-size="24" textLength="140" lengthAdjust="spacingAndGlyphs" fill="#fff">Print &amp; Close</text>
<rect x="1087" y="1141" width="173" height="50" rx="5" fill="#f5f5f5" stroke="#9a9a9a" stroke-width="2"/>
<text class="btn" x="1104" y="1174" textLength="139" lengthAdjust="spacingAndGlyphs">Sign &amp; Close</text>
<rect x="1272" y="1141" width="270" height="50" rx="5" fill="#f5f5f5" stroke="#9a9a9a" stroke-width="2"/>
<text class="btn" x="1289" y="1174" textLength="236" lengthAdjust="spacingAndGlyphs">Save as Draft &amp; Close</text>
<rect x="1554" y="1141" width="115" height="50" rx="5" fill="#f5f5f5" stroke="#9a9a9a" stroke-width="2"/>
<text class="btn" x="1571" y="1174" textLength="81" lengthAdjust="spacingAndGlyphs">Discard</text>

<!-- sleep highlight + annotation -->
<rect x="1173" y="362" width="313" height="53" fill="#fff"/>
<rect x="1178" y="362" width="300" height="49" fill="#3a6db3"/>
<text class="dd" x="1192" y="394" textLength="144" lengthAdjust="spacingAndGlyphs" style="fill:#fff">Sleep Order</text>
<rect x="1168" y="357" width="325" height="63" fill="none" stroke="#d13a1e" stroke-width="10"/>
<path d="M1165 392C1130 377 1108 369 1082 369C1030 369 1004 405 998 446" fill="none" stroke="#d13a1e" stroke-width="10"/>
<path d="M973 442H1023L997 491Z" fill="#d13a1e"/>
</svg>
</body></html>
